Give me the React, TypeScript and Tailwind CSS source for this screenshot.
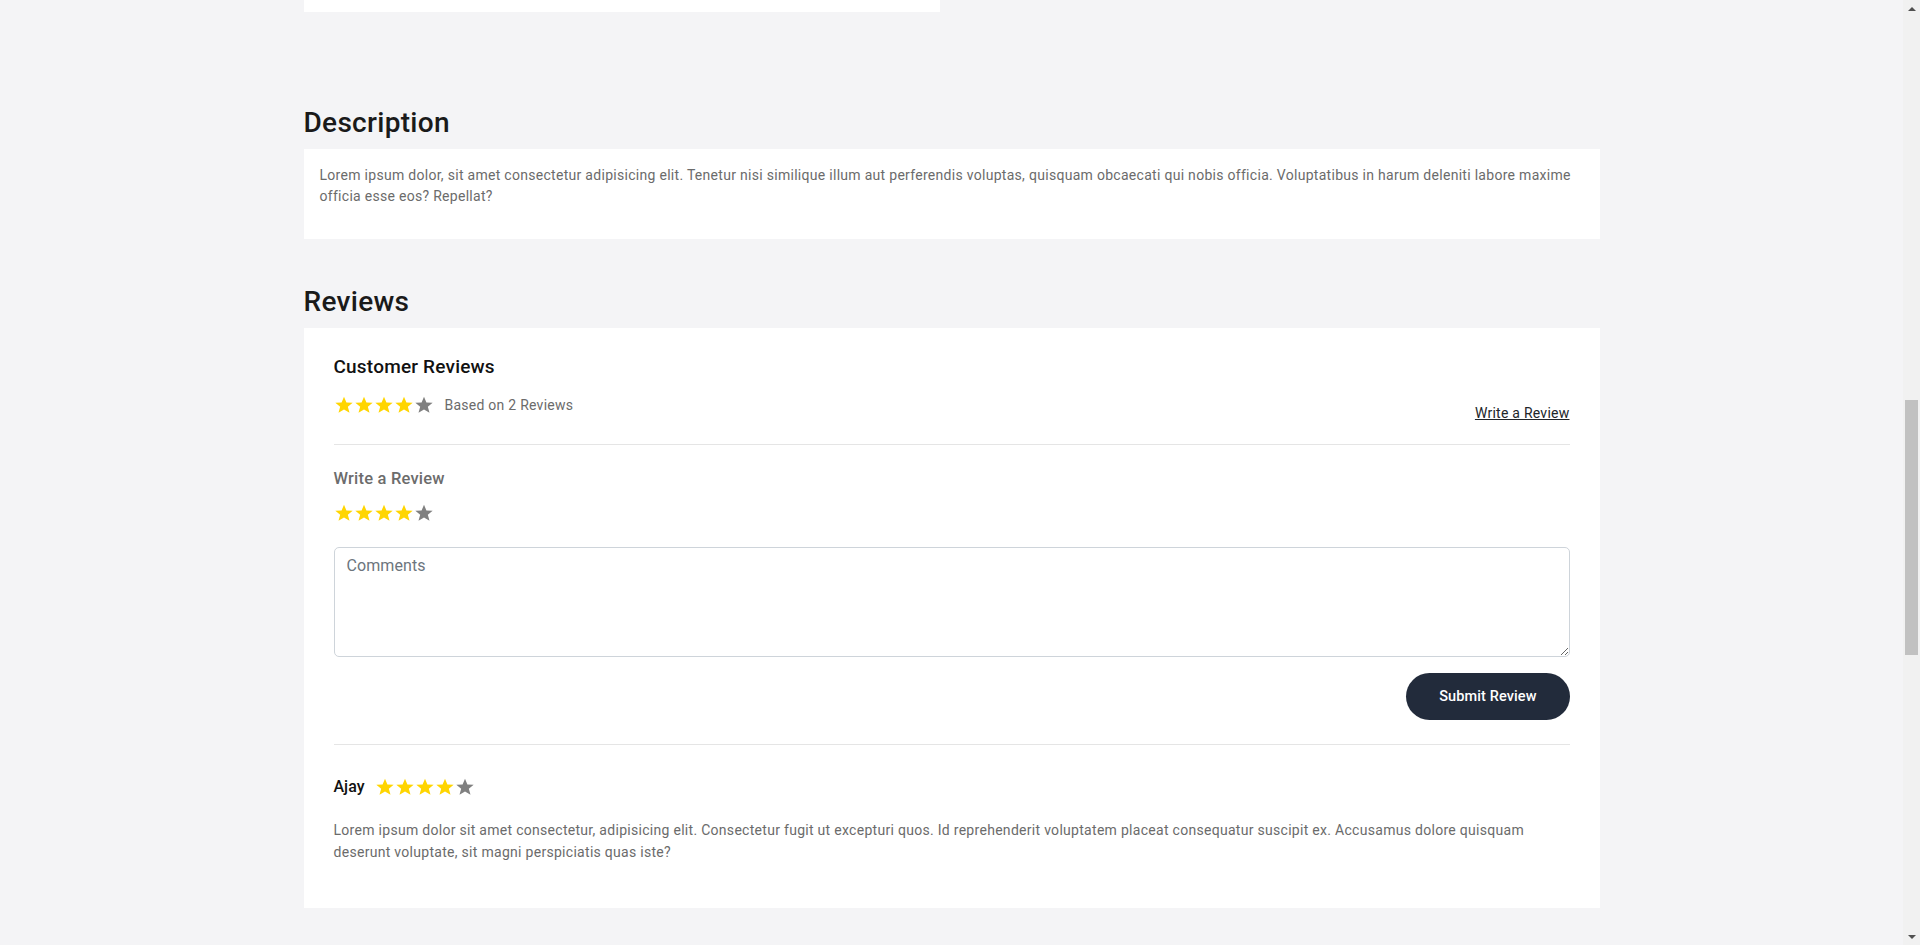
import { useLayoutEffect, useRef } from 'react';

function Stars({ value, total = 5 }: { value: number; total?: number }) {
  return (
    <div className="flex items-center">
      {Array.from({ length: total }).map((_, i) => (
        <svg key={i} viewBox="0 0 24 24" className="w-[20px] h-[20px]">
          <polygon
            points="12,2.2 14.9,9 22.4,9.3 16.6,14 18.6,21.4 12,17.3 5.4,21.4 7.4,14 1.6,9.3 9.1,9"
            fill={i < value ? '#ffd500' : '#808080'}
          />
        </svg>
      ))}
    </div>
  );
}

function ScrollBar() {
  return (
    <div className="w-[17px] shrink-0 bg-[#f1f1f1] flex flex-col">
      <div className="h-[17px] flex items-center justify-center">
        <svg viewBox="0 0 8 4" className="w-[8px] h-[4px]"><polygon points="4,0 8,4 0,4" fill="#505050" /></svg>
      </div>
      <div className="flex-1">
        <div className="mt-[383px] h-[255px] mx-[2px] bg-[#c1c1c1]" />
      </div>
      <div className="h-[17px] flex items-center justify-center">
        <svg viewBox="0 0 8 4" className="w-[8px] h-[4px]"><polygon points="0,0 8,0 4,4" fill="#505050" /></svg>
      </div>
    </div>
  );
}

export default function App() {
  const scroller = useRef<HTMLDivElement>(null);
  const productBox = useRef<HTMLDivElement>(null);

  // page is shown scrolled down to the description / reviews part
  useLayoutEffect(() => {
    const s = scroller.current;
    const b = productBox.current;
    if (!s || !b) return;
    const bottom = b.getBoundingClientRect().bottom - s.getBoundingClientRect().top + s.scrollTop;
    s.scrollTop = bottom - 12;
  }, []);

  return (
    <div className="h-screen flex bg-[#f4f4f6] font-['Roboto',sans-serif] text-[#212529]">
      <div ref={scroller} className="flex-1 overflow-y-auto [scrollbar-width:none]">
        <div className="max-w-[1320px] mx-auto px-3 pb-12">
          {/* product */}
          <div className="pt-12 grid grid-cols-2 gap-6">
            <div ref={productBox} className="bg-white h-[636px]" />
            <div />
          </div>

          {/* description */}
          <section className="mt-24">
            <h3 className="text-[28px] leading-[29px] font-medium tracking-[0.3px] text-[#1a1a1a] mb-3">Description</h3>
            <div className="bg-white p-4">
              <p className="text-[14px] leading-[21px] tracking-[0.29px] text-[#6b6b6b] mb-4">
                Lorem ipsum dolor, sit amet consectetur adipisicing elit. Tenetur nisi similique illum aut perferendis voluptas, quisquam obcaecati qui nobis officia. Voluptatibus in harum deleniti labore maxime officia esse eos? Repellat?
              </p>
            </div>
          </section>

          {/* reviews */}
          <section className="mt-12">
            <h3 className="text-[28px] leading-[29px] font-medium tracking-[0.3px] text-[#1a1a1a] mb-3">Reviews</h3>
            <div className="bg-white px-[30px] pt-7 pb-[45px]">
              <div className="flex justify-between items-end pb-[25px] border-b border-[#e5e5e5]">
                <div>
                  <h5 className="text-[19px] leading-[22px] font-medium tracking-[0.2px] text-[#111]">Customer Reviews</h5>
                  <div className="flex items-center gap-[11px] mt-[13px] h-[28px]">
                    <Stars value={4} />
                    <span className="text-[14px] tracking-[0.25px] text-[#6b6b6b]">Based on 2 Reviews</span>
                  </div>
                </div>
                <a href="#" className="text-[14px] leading-[20px] tracking-[0.25px] underline text-[#212529] -mb-[4px]">Write a Review</a>
              </div>

              <div className="pt-[22px] pb-6 border-b border-[#e5e5e5]">
                <h6 className="text-[16.5px] leading-[24px] font-medium tracking-[0.2px] text-[#6c6c6c]">Write a Review</h6>
                <div className="mt-2 h-[28px] flex items-center">
                  <Stars value={4} />
                </div>
                <textarea
                  rows={4}
                  placeholder="Comments"
                  className="mt-5 block w-full h-[110px] border border-[#ced4da] rounded-[5px] px-3 py-1.5 text-[16px] leading-[24px] tracking-[0.1px] placeholder:text-[#6c757d] outline-none"
                />
                <div className="flex justify-end mt-4">
                  <button className="h-[47px] px-[33px] rounded-full bg-[#222b3b] text-white text-[14.5px] tracking-[0.1px] font-medium">
                    Submit Review
                  </button>
                </div>
              </div>

              <div className="pt-[30px]">
                <div className="flex items-center gap-[11px]">
                  <span className="text-[16px] leading-[24px] font-medium text-[#111]">Ajay</span>
                  <Stars value={4} />
                </div>
                <p className="mt-5 text-[14px] leading-[22px] tracking-[0.29px] text-[#6b6b6b]">
                  Lorem ipsum dolor sit amet consectetur, adipisicing elit. Consectetur fugit ut excepturi quos. Id reprehenderit voluptatem placeat consequatur suscipit ex. Accusamus dolore quisquam deserunt voluptate, sit magni perspiciatis quas iste?
                </p>
              </div>
            </div>
          </section>
        </div>
      </div>
      <ScrollBar />
    </div>
  );
}
